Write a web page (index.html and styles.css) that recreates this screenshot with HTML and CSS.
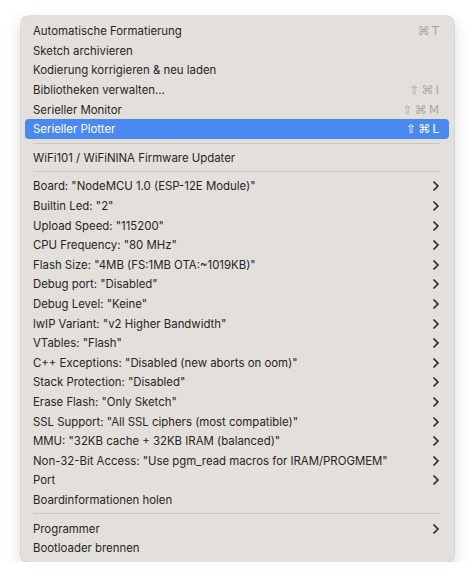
FILE: index.html
```html
<!DOCTYPE html>
<html lang="de">
<head>
<meta charset="utf-8">
<title>Menü</title>
<link rel="stylesheet" href="styles.css">
</head>
<body>
<div class="menu">
  <div class="item"><span class="label">Automatische Formatierung</span><span class="key">⌘T</span></div>
  <div class="item"><span class="label">Sketch archivieren</span></div>
  <div class="item"><span class="label">Kodierung korrigieren &amp; neu laden</span></div>
  <div class="item"><span class="label">Bibliotheken verwalten...</span><span class="key">⇧⌘I</span></div>
  <div class="item"><span class="label">Serieller Monitor</span><span class="key">⇧⌘M</span></div>
  <div class="item active"><span class="label">Serieller Plotter</span><span class="key">⇧⌘L</span></div>
  <div class="sep"></div>
  <div class="item"><span class="label">WiFi101 / WiFiNINA Firmware Updater</span></div>
  <div class="sep"></div>
  <div class="item"><span class="label">Board: "NodeMCU 1.0 (ESP-12E Module)"</span><svg class="chev" viewBox="0 0 6 10"><path d="M1 1 L5 5 L1 9"/></svg></div>
  <div class="item"><span class="label">Builtin Led: "2"</span><svg class="chev" viewBox="0 0 6 10"><path d="M1 1 L5 5 L1 9"/></svg></div>
  <div class="item"><span class="label">Upload Speed: "115200"</span><svg class="chev" viewBox="0 0 6 10"><path d="M1 1 L5 5 L1 9"/></svg></div>
  <div class="item"><span class="label">CPU Frequency: "80 MHz"</span><svg class="chev" viewBox="0 0 6 10"><path d="M1 1 L5 5 L1 9"/></svg></div>
  <div class="item"><span class="label">Flash Size: "4MB (FS:1MB OTA:~1019KB)"</span><svg class="chev" viewBox="0 0 6 10"><path d="M1 1 L5 5 L1 9"/></svg></div>
  <div class="item"><span class="label">Debug port: "Disabled"</span><svg class="chev" viewBox="0 0 6 10"><path d="M1 1 L5 5 L1 9"/></svg></div>
  <div class="item"><span class="label">Debug Level: "Keine"</span><svg class="chev" viewBox="0 0 6 10"><path d="M1 1 L5 5 L1 9"/></svg></div>
  <div class="item"><span class="label">lwIP Variant: "v2 Higher Bandwidth"</span><svg class="chev" viewBox="0 0 6 10"><path d="M1 1 L5 5 L1 9"/></svg></div>
  <div class="item"><span class="label">VTables: "Flash"</span><svg class="chev" viewBox="0 0 6 10"><path d="M1 1 L5 5 L1 9"/></svg></div>
  <div class="item"><span class="label">C++ Exceptions: "Disabled (new aborts on oom)"</span><svg class="chev" viewBox="0 0 6 10"><path d="M1 1 L5 5 L1 9"/></svg></div>
  <div class="item"><span class="label">Stack Protection: "Disabled"</span><svg class="chev" viewBox="0 0 6 10"><path d="M1 1 L5 5 L1 9"/></svg></div>
  <div class="item"><span class="label">Erase Flash: "Only Sketch"</span><svg class="chev" viewBox="0 0 6 10"><path d="M1 1 L5 5 L1 9"/></svg></div>
  <div class="item"><span class="label">SSL Support: "All SSL ciphers (most compatible)"</span><svg class="chev" viewBox="0 0 6 10"><path d="M1 1 L5 5 L1 9"/></svg></div>
  <div class="item"><span class="label">MMU: "32KB cache + 32KB IRAM (balanced)"</span><svg class="chev" viewBox="0 0 6 10"><path d="M1 1 L5 5 L1 9"/></svg></div>
  <div class="item"><span class="label">Non-32-Bit Access: "Use pgm_read macros for IRAM/PROGMEM"</span><svg class="chev" viewBox="0 0 6 10"><path d="M1 1 L5 5 L1 9"/></svg></div>
  <div class="item"><span class="label">Port</span><svg class="chev" viewBox="0 0 6 10"><path d="M1 1 L5 5 L1 9"/></svg></div>
  <div class="item"><span class="label">Boardinformationen holen</span></div>
  <div class="sep"></div>
  <div class="item"><span class="label">Programmer</span><svg class="chev" viewBox="0 0 6 10"><path d="M1 1 L5 5 L1 9"/></svg></div>
  <div class="item"><span class="label">Bootloader brennen</span></div>
</div>
</body>
</html>
```
FILE: styles.css
```css
html, body {
  margin: 0;
  padding: 0;
  background: #ffffff;
}
body {
  padding: 16px 0 0 21px;
  font-family: "Inter", "Liberation Sans", sans-serif;
}
.menu {
  width: 433px;
  box-sizing: border-box;
  padding: 5px 5px 5px 4px;
  background: #e3e0dc;
  border-radius: 7px;
  box-shadow: 0 0 0 0.5px rgba(0, 0, 0, 0.18), 0 6px 16px rgba(0, 0, 0, 0.16);
  display: flex;
  flex-direction: column;
}
.item {
  height: 19.6px;
  display: flex;
  align-items: center;
  justify-content: space-between;
  padding: 1px 10px 0 8px;
  box-sizing: border-box;
  border-radius: 4px;
  font-size: 11.4px;
  color: #262524;
  white-space: nowrap;
}
.item.active {
  background: #4a8af0;
  color: #ffffff;
}
.key {
  color: #a9a6a2;
  font-family: "DejaVu Sans", sans-serif;
  font-size: 12px;
  letter-spacing: 2px;
  margin-right: -2px;
}
.item.active .key {
  color: #ffffff;
}
.chev {
  width: 6px;
  height: 10px;
  fill: none;
  stroke: #262524;
  stroke-width: 1.7;
  stroke-linecap: round;
  stroke-linejoin: round;
}
.sep {
  height: 9px;
  display: flex;
  align-items: center;
  padding: 0 9px 0 8px;
}
.sep::before {
  content: "";
  flex: 1;
  height: 1px;
  background: #ccc9c5;
}
```
